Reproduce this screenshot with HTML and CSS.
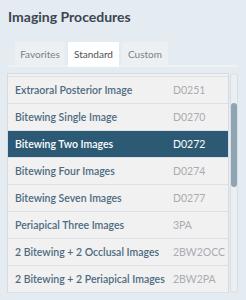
FILE: index.html
```html
<!DOCTYPE html>
<html>

<head>
    <meta charset="UTF-8">
    <title>Imaging Procedures</title>
    <link rel="stylesheet" href="styles.css">
</head>

<body>
    <div class="panel">
        <h1 class="panel-title">Imaging Procedures</h1>
        <div class="tabs">
            <div class="tab">Favorites</div>
            <div class="tab active">Standard</div>
            <div class="tab">Custom</div>
        </div>
        <div class="list-wrap">
            <div class="list">
                <div class="rows">
                    <div class="row"><span class="name">Extraoral Image</span><span class="code">D0250</span></div>
                    <div class="row"><span class="name">Extraoral Posterior Image</span><span class="code">D0251</span></div>
                    <div class="row"><span class="name">Bitewing Single Image</span><span class="code">D0270</span></div>
                    <div class="row selected"><span class="name">Bitewing Two Images</span><span class="code">D0272</span></div>
                    <div class="row"><span class="name">Bitewing Four Images</span><span class="code">D0274</span></div>
                    <div class="row"><span class="name">Bitewing Seven Images</span><span class="code">D0277</span></div>
                    <div class="row"><span class="name">Periapical Three Images</span><span class="code">3PA</span></div>
                    <div class="row"><span class="name">2 Bitewing + 2 Occlusal Images</span><span class="code">2BW2OCC</span></div>
                    <div class="row"><span class="name">2 Bitewing + 2 Periapical Images</span><span class="code">2BW2PA</span></div>
                </div>
            </div>
            <div class="scrollbar">
                <div class="thumb"></div>
            </div>
        </div>
    </div>
</body>

</html>
```

FILE: styles.css
```css
/* imaging procedures panel */
body {
    margin: 0;
    background-color: #e4ebf1;
    font-family: Lato, "Open Sans", sans-serif;
}

.panel {
    width: 246px;
    height: 300px;
    padding: 8px 8px 0 7px;
    box-sizing: border-box;
}

.panel-title {
    margin: 0 0 0 1px;
    font-size: 14px;
    line-height: 18px;
    font-weight: 700;
    color: #3b4651;
}

.tabs {
    display: flex;
    align-items: flex-start;
    gap: 3px;
    margin: 16px 0 0 1px;
    padding-left: 7px;
    border-bottom: 2px solid #eef2f5;
}

.tab {
    display: flex;
    align-items: center;
    justify-content: center;
    width: 50px;
    height: 23px;
    font-size: 10px;
    color: #7a7f85;
    background-color: #edf0f3;
}

.tab.active {
    width: 51px;
    margin-bottom: -2px;
    height: 25px;
    padding-bottom: 2px;
    box-sizing: border-box;
    background-color: #fff;
    color: #4a4f55;
}

.tab:last-child {
    width: 46px;
}

.list-wrap {
    display: flex;
    gap: 1px;
    margin-top: 6px;
    height: 220px;
}

.list {
    width: 222px;
    border: 1px solid #d5dbe1;
    border-bottom: none;
    box-sizing: border-box;
    overflow: hidden;
    background-color: #f1f1f1;
}

.rows {
    margin-top: -24px;
}

.row {
    display: grid;
    grid-template-columns: 158px auto;
    height: 27px;
    padding-left: 7px;
    align-items: center;
    border-bottom: 1px solid #dde1e6;
    box-sizing: border-box;
    font-size: 10.5px;
    white-space: nowrap;
}

.name {
    font-weight: 600;
    color: #4d6b80;
}

.code {
    color: #a9adb1;
}

.row.selected {
    background-color: #2c5a75;
}

.row.selected .name,
.row.selected .code {
    color: #fff;
}

.scrollbar {
    width: 8px;
    height: 220px;
    border-radius: 4px;
    background-color: #eceff2;
    border: 1px solid #d9dee3;
    box-sizing: border-box;
    padding-top: 29px;
}

.thumb {
    height: 84px;
    border-radius: 3px;
    background-color: #8fa4b3;
}
```
